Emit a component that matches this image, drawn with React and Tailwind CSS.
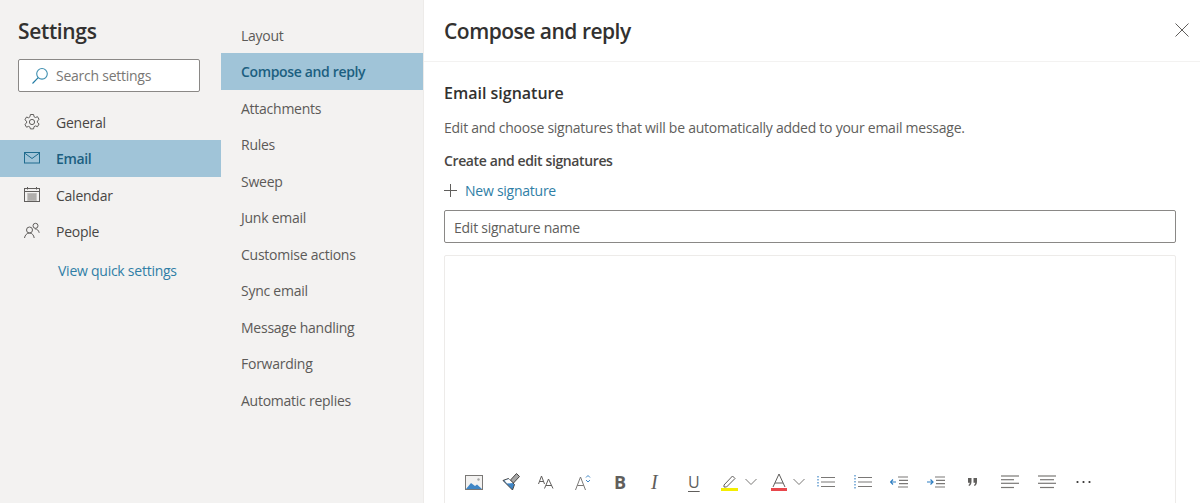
const font = { fontFamily: '"Open Sans", "Noto Sans", sans-serif' };

const subItems = ['Layout', 'Compose and reply', 'Attachments', 'Rules', 'Sweep', 'Junk email', 'Customise actions', 'Sync email', 'Message handling', 'Forwarding', 'Automatic replies'];

const GearIcon = () => (
  <svg width="18" height="18" viewBox="0 0 18 18" fill="none" stroke="#605e5c" strokeWidth="1">
    <circle cx="9" cy="9" r="2.6" />
    <path d="M7.4 1.5h3.2l.4 2.2 1.4.8 2.1-.8 1.6 2.8-1.7 1.4v1.6l1.7 1.4-1.6 2.8-2.1-.8-1.4.8-.4 2.2H7.4L7 14.2l-1.4-.8-2.1.8-1.6-2.8 1.7-1.4V8.2L1.9 6.8l1.6-2.8 2.1.8L7 3.7z" strokeLinejoin="round" />
  </svg>
);

const MailIcon = () => (
  <svg width="18" height="18" viewBox="0 0 18 18" fill="none" stroke="#1f6b8e" strokeWidth="1">
    <rect x="1.5" y="3.5" width="15" height="10.5" />
    <path d="M1.5 4l7.5 5.5L16.5 4" />
  </svg>
);

const CalendarIcon = () => (
  <svg width="18" height="18" viewBox="0 0 18 18" fill="none" stroke="#605e5c" strokeWidth="1">
    <rect x="1.5" y="2.5" width="15" height="13" />
    <path d="M1.5 5.5h15M4.5 1v2.5M13.5 1v2.5" />
    <path d="M4 8h10M4 10h10M4 12h10M4 14h10M6 7.5v7M8 7.5v7M10 7.5v7M12 7.5v7" strokeWidth="0.8" stroke="#8a8886" />
  </svg>
);

const PeopleIcon = () => (
  <svg width="18" height="18" viewBox="0 0 18 18" fill="none" stroke="#605e5c" strokeWidth="1">
    <circle cx="6.5" cy="8" r="3" />
    <path d="M1.5 16c.4-2.8 2.4-5 5-5s4.3 2.2 4.7 5" />
    <circle cx="12.5" cy="3.8" r="2.5" />
    <path d="M11.8 6.8c2.2 0 3.9 1.6 4.4 4" />
  </svg>
);

const SearchIcon = () => (
  <svg width="18" height="18" viewBox="0 0 18 18" fill="none" strokeWidth="1.1">
    <circle cx="11" cy="6.8" r="5.3" stroke="#3f8fb0" />
    <path d="M7.2 10.6L1.5 16.5" stroke="#1f7aa3" />
  </svg>
);

const NavRow = ({ icon, label, active }) => (
  <div className={`flex items-center h-[36.5px] pl-[23px] ${active ? 'bg-[#a0c4d8] text-[#1c5f80] font-semibold' : 'text-[#484644]'}`}>
    <span className="w-[33px] flex">{icon}</span>
    <span className={`pt-[1px] text-[14px] ${active ? 'tracking-[-0.35px]' : 'tracking-[-0.25px]'}`}>{label}</span>
  </div>
);

const ImageIcon = () => (
  <svg width="18" height="15" viewBox="0 0 18 15" fill="none">
    <rect x="0.5" y="0.5" width="17" height="14" fill="#f3f2f1" stroke="#7a7876" />
    <path d="M1 14l5-6 4 3 2-1.5 5 4.5z" fill="#3f86c6" />
    <circle cx="13.5" cy="4.5" r="1.2" fill="#a6a6a6" />
  </svg>
);

const BrushIcon = () => (
  <svg width="18" height="18" viewBox="0 0 18 18" fill="none">
    <path d="M1 7.5l5.5-2 6 6-2 5.5z" fill="#3f86c6" stroke="#484644" strokeLinejoin="round" />
    <path d="M2.5 7.5L7 6l4 4-6 .5z" fill="#fff" />
    <path d="M8.5 7l6-6.5 3 3-6 6.5z" fill="#a6a6a6" stroke="#484644" strokeLinejoin="round" />
  </svg>
);

const FontSizeIcon = () => (
  <svg width="16" height="14" viewBox="0 0 16 14" fill="none" stroke="#605e5c" strokeWidth="1">
    <path d="M0.5 9L3.5 1l3 8M1.5 6.5h4" />
    <path d="M6.5 13.5L10.5 4l4.5 9.5M8 10.5h5.5" />
  </svg>
);

const GrowIcon = () => (
  <svg width="17" height="17" viewBox="0 0 17 17" fill="none" strokeWidth="1">
    <path d="M0.5 16L5.5 3l5 13M2.3 11.5h6.4" stroke="#7a7876" />
    <path d="M11 3.5l2-2 2 2M11 6l2 2 2-2" stroke="#3f86c6" />
  </svg>
);

const HighlightIcon = () => (
  <svg width="17" height="18" viewBox="0 0 17 18" fill="none">
    <path d="M3 12L11.5 3 14 5.5 5.5 14H3z" stroke="#605e5c" />
    <rect x="0" y="15" width="17" height="3" fill="#f4ee00" />
  </svg>
);

const FontColorIcon = () => (
  <svg width="16" height="18" viewBox="0 0 16 18" fill="none">
    <path d="M2 14L8 1l6 13M4 10h8" stroke="#605e5c" />
    <rect x="0" y="15" width="16" height="3" fill="#e8474c" />
  </svg>
);

const Chevron = () => (
  <svg width="12" height="8" viewBox="0 0 12 8" fill="none" stroke="#7a7876">
    <path d="M0.5 1L6 6.5 11.5 1" />
  </svg>
);

const ListIcon = ({ dots }) => (
  <svg width="18" height="14" viewBox="0 0 18 14" fill="none">
    <path d="M4 2.5h14M4 7h14M4 11.5h14" stroke="#7a7876" strokeWidth="1.2" />
    <path d={dots} stroke="#3f86c6" strokeWidth="1.2" strokeDasharray="1.5 1.5" />
  </svg>
);

const IndentIcon = ({ flip }) => (
  <svg width="18" height="12" viewBox="0 0 18 12" fill="none">
    <path d="M8 1h10M9 4.3h9M9 7.6h9M8 11h10" stroke="#7a7876" strokeWidth="1.2" />
    <path d={flip ? 'M0 6h6M3.5 3.5L6 6l-2.5 2.5' : 'M6 6H0.5M3 3.5L0.5 6 3 8.5'} stroke="#2f7fc2" strokeWidth="1.2" />
  </svg>
);

const QuoteIcon = () => (
  <svg width="9" height="8" viewBox="0 0 9 8" fill="#605e5c">
    <path d="M0 0h3.5v3.5C3.5 6 2.5 7.500 1 8l-.5-1c.8-.4 1.2-1.2 1.2-2.2H0zM5.500 0H9v3.500C9 6 8 7.500 6.500 8L6 7c.8-.4 1.2-1.2 1.2-2.2H5.500z" />
  </svg>
);

const AlignIcon = ({ center }) => (
  <svg width="18" height="14" viewBox="0 0 18 14" fill="none" stroke="#7a7876" strokeWidth="1.2">
    <path d="M0 1h18" />
    <path d={center ? 'M2 4.7h14' : 'M0 4.7h13'} />
    <path d="M0 8.3h18" />
    <path d={center ? 'M2 12.5h14' : 'M0 12.5h13'} />
  </svg>
);

const MoreIcon = () => (
  <svg width="15" height="4" viewBox="0 0 15 4" fill="#323130">
    <circle cx="1.5" cy="2" r="1.1" />
    <circle cx="7.5" cy="2" r="1.1" />
    <circle cx="13.5" cy="2" r="1.1" />
  </svg>
);

const App = () => {
  return (
    <div className="flex h-[503px] w-[1200px] overflow-hidden bg-white" style={font}>
      <aside className="w-[221px] shrink-0 bg-[#f3f2f1]">
        <h1 className="ml-[18px] mt-[16px] h-[30px] leading-[30px] text-[21px] font-semibold tracking-[-0.35px] text-[#323130]">Settings</h1>
        <div className="ml-[18px] mt-[13px] flex h-[33px] w-[182px] items-center rounded-[2px] border border-[#8a8886] bg-white pl-[12px]">
          <SearchIcon />
          <span className="ml-[7px] text-[14px] tracking-[-0.25px] text-[#797775]">Search settings</span>
        </div>
        <div className="mt-[11.5px]">
          <NavRow icon={<GearIcon />} label="General" />
          <NavRow icon={<MailIcon />} label="Email" active />
          <NavRow icon={<CalendarIcon />} label="Calendar" />
          <NavRow icon={<PeopleIcon />} label="People" />
        </div>
        <div className="ml-[58px] mt-[3.5px] h-[36px] text-[14px] leading-[36px] tracking-[-0.25px] text-[#2f7ea6]">View quick settings</div>
      </aside>

      <nav className="w-[203px] shrink-0 bg-[#f3f2f1] pt-[16.75px] border-r border-[#edebe9]">
        {subItems.map((item) => (
          <div
            key={item}
            className={`flex h-[36.5px] items-center pl-[20px] text-[14px] ${item === 'Compose and reply' ? 'bg-[#a0c4d8] font-semibold tracking-[-0.35px] text-[#1c5f80]' : 'tracking-[-0.25px] text-[#5c5a58]'}`}
          >
            {item}
          </div>
        ))}
      </nav>

      <main className="flex-1 min-w-0">
        <header className="flex h-[62px] items-center justify-between border-b border-[#f3f2f1] pl-[20px] pr-[11px]">
          <h2 className="pt-[2px] text-[21px] font-semibold tracking-[-0.5px] text-[#323130]">Compose and reply</h2>
          <svg width="14" height="14" viewBox="0 0 14 14" fill="none" stroke="#605e5c" strokeWidth="1" className="mb-[1px]">
            <path d="M0.5 0.5l13 13M13.5 0.5l-13 13" />
          </svg>
        </header>
        <div className="pl-[20px] pr-[24px]">
          <h3 className="mt-[19px] h-[24px] text-[16px] font-semibold leading-[24px] text-[#323130]">Email signature</h3>
          <p className="mt-[13px] h-[20px] text-[14px] leading-[20px] tracking-[-0.25px] text-[#605e5c]">Edit and choose signatures that will be automatically added to your email message.</p>
          <p className="mt-[13px] h-[20px] text-[14px] font-semibold leading-[20px] tracking-[-0.38px] text-[#484644]">Create and edit signatures</p>
          <div className="mt-[9px] flex h-[20px] items-center">
            <svg width="13" height="13" viewBox="0 0 13 13" fill="none" stroke="#605e5c" strokeWidth="1">
              <path d="M6.5 0v13M0 6.5h13" />
            </svg>
            <span className="ml-[8px] text-[14px] tracking-[-0.25px] text-[#2f7ea6]">New signature</span>
          </div>
          <div className="mt-[10px] flex h-[33px] items-center rounded-[2px] border border-[#8a8886] pl-[9px] pt-[1px] text-[14px] tracking-[-0.25px] text-[#605e5c]">Edit signature name</div>
          <div className="mt-[12px] flex h-[260px] items-end rounded-[2px] border border-[#edebe9] pb-[22px] pl-[20px]">
            <div className="flex h-[20px] items-center">
              <span className="flex w-[37px]"><ImageIcon /></span>
              <span className="flex w-[36px]"><BrushIcon /></span>
              <span className="flex w-[37px]"><FontSizeIcon /></span>
              <span className="flex w-[39px]"><GrowIcon /></span>
              <span className="w-[36px] text-[18px] font-bold leading-none text-[#605e5c]">B</span>
              <span className="w-[38px] pl-[1px] text-[20px] italic leading-none text-[#605e5c]" style={{ fontFamily: '"Liberation Serif", serif' }}>I</span>
              <span className="w-[33px] text-[16px] underline underline-offset-[3px] leading-none text-[#605e5c]">U</span>
              <span className="flex w-[24px]"><HighlightIcon /></span>
              <span className="flex w-[26px]"><Chevron /></span>
              <span className="flex w-[22px]"><FontColorIcon /></span>
              <span className="flex w-[24px]"><Chevron /></span>
              <span className="flex w-[37px]"><ListIcon dots="M1 1v12" /></span>
              <span className="flex w-[36px]"><ListIcon dots="M1 0v14" /></span>
              <span className="flex w-[37px]"><IndentIcon /></span>
              <span className="flex w-[41px]"><IndentIcon flip /></span>
              <span className="flex w-[33px]"><QuoteIcon /></span>
              <span className="flex w-[37px]"><AlignIcon /></span>
              <span className="flex w-[38px]"><AlignIcon center /></span>
              <MoreIcon />
            </div>
          </div>
        </div>
      </main>
    </div>
  );
};

export default App;
